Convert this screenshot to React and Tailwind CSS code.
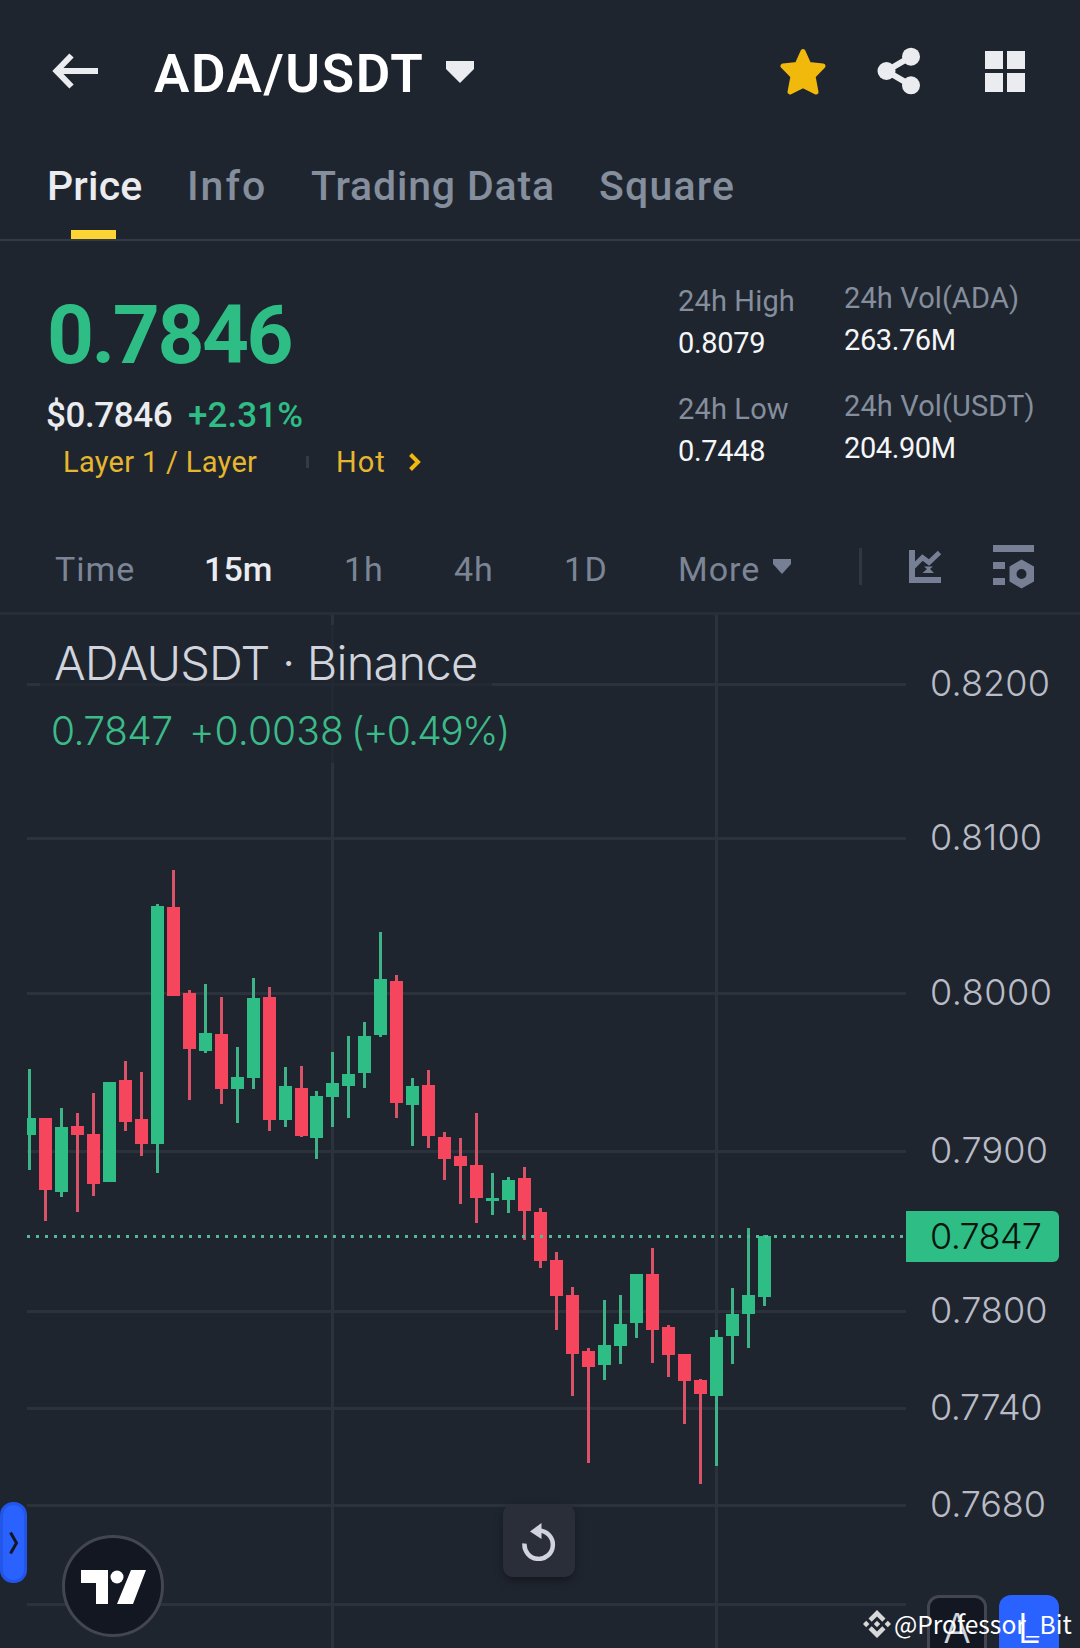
import React from "react";

const UP = "#2ebd85";
const DOWN = "#f6465d";
const UP_WICK = "#3fb388";
const DOWN_WICK = "#da5268";

// [direction, wick top, wick bottom, body top, body bottom]
const candles = [
  ["u", 1069, 1170, 1118, 1135],
  ["d", 1118, 1221, 1118, 1190],
  ["u", 1108, 1197, 1127, 1192],
  ["d", 1113, 1212, 1126, 1135],
  ["d", 1093, 1196, 1134, 1184],
  ["u", 1082, 1182, 1082, 1182],
  ["d", 1061, 1131, 1080, 1122],
  ["d", 1072, 1156, 1119, 1144],
  ["u", 904, 1173, 906, 1144],
  ["d", 870, 996, 907, 996],
  ["d", 990, 1100, 993, 1049],
  ["u", 984, 1053, 1033, 1051],
  ["d", 997, 1104, 1034, 1089],
  ["u", 1047, 1123, 1077, 1089],
  ["u", 978, 1089, 998, 1078],
  ["d", 987, 1131, 997, 1120],
  ["u", 1067, 1127, 1086, 1120],
  ["d", 1066, 1137, 1088, 1136],
  ["u", 1091, 1159, 1096, 1138],
  ["u", 1052, 1127, 1083, 1097],
  ["u", 1036, 1118, 1074, 1086],
  ["u", 1022, 1088, 1036, 1073],
  ["u", 932, 1037, 979, 1035],
  ["d", 975, 1118, 981, 1103],
  ["u", 1078, 1146, 1086, 1105],
  ["d", 1070, 1148, 1085, 1136],
  ["d", 1132, 1180, 1137, 1159],
  ["d", 1138, 1204, 1156, 1166],
  ["d", 1113, 1223, 1165, 1198],
  ["u", 1173, 1215, 1198, 1201],
  ["u", 1177, 1213, 1180, 1200],
  ["d", 1167, 1240, 1178, 1211],
  ["d", 1208, 1268, 1212, 1261],
  ["d", 1252, 1330, 1260, 1296],
  ["d", 1287, 1396, 1295, 1354],
  ["d", 1348, 1463, 1351, 1367],
  ["u", 1300, 1380, 1345, 1365],
  ["u", 1295, 1364, 1324, 1346],
  ["u", 1274, 1338, 1274, 1323],
  ["d", 1248, 1363, 1274, 1330],
  ["d", 1325, 1377, 1327, 1355],
  ["d", 1354, 1424, 1354, 1381],
  ["d", 1379, 1484, 1380, 1394],
  ["u", 1330, 1466, 1337, 1396],
  ["u", 1288, 1364, 1314, 1336],
  ["u", 1228, 1348, 1295, 1314],
  ["u", 1235, 1306, 1236, 1297],
];

const axis = [
  ["0.8200", 696, 120],
  ["0.8100", 850, 112],
  ["0.8000", 1005, 122],
  ["0.7900", 1163, 118],
  ["0.7800", 1323, 117.5],
  ["0.7740", 1420, 112.5],
  ["0.7680", 1517, 116],
];

const gridRows = [683, 837, 992, 1150, 1310, 1407, 1504, 1603];

function Header() {
  return (
    <header className="flex h-[142px] items-center pl-[52px] pr-[55px] text-[#eaecef]">
      <svg className="h-[38px] w-[47px] shrink-0" viewBox="0 0 47 38" fill="none" stroke="#eaecef" strokeWidth="6">
        <path d="M4 19H46M19.500 3.500L4.500 19L19.500 34.500" />
      </svg>
      <h1 className="ml-[55px] w-[292px] pt-[5px] text-[53px] font-semibold leading-[60px] tracking-[1.6px] text-white">ADA/USDT</h1>
      <svg className="mt-[2px] h-[22px] w-[28px] shrink-0" viewBox="0 0 28 22" fill="#eaecef">
        <path d="M0 0H28V8L14 22L0 8Z" />
      </svg>
      <svg className="ml-auto mt-[2px] h-[48px] w-[46px] shrink-0" viewBox="0 0 46 48" fill="#f0b90b" stroke="#f0b90b" strokeWidth="5" strokeLinejoin="round">
        <path d="M23 3.500L28.800 16.500L43 18L33 28.200L36 44L23 37.500L10 44L13 28.200L3 18L17.200 16.500Z" />
      </svg>
      <svg className="ml-[51px] h-[48px] w-[43px] shrink-0" viewBox="0 0 43 48" fill="#eaecef">
        <path d="M34 9.700L9.500 24L34 38.300" fill="none" stroke="#eaecef" strokeWidth="6" />
        <circle cx="9.500" cy="24" r="9" />
        <circle cx="34" cy="9.700" r="9" />
        <circle cx="34" cy="38.300" r="9" />
      </svg>
      <div className="ml-[65px] grid h-[41px] w-[40px] shrink-0 grid-cols-2 gap-[4px]">
        <i className="bg-[#eaecef]" />
        <i className="bg-[#eaecef]" />
        <i className="bg-[#eaecef]" />
        <i className="bg-[#eaecef]" />
      </div>
    </header>
  );
}

function Tabs() {
  return (
    <nav className="flex h-[99px] border-b-2 border-[#333b47] pl-[47px] pt-[19px] text-[41px] font-medium leading-[50px] text-[#848e9c]">
      <div className="flex w-[140px] flex-col justify-between text-[#eaecef]">
        <span className="tracking-[0.2px]">Price</span>
        <i className="ml-[24px] h-[9px] w-[45px] bg-[#fcd535]" />
      </div>
      <span className="w-[124px] tracking-[2px]">Info</span>
      <span className="w-[288px] tracking-[0.84px]">Trading Data</span>
      <span className="tracking-[1.2px]">Square</span>
    </nav>
  );
}

function Stat({ label, value, labelClass, valueClass }) {
  return (
    <div className="flex flex-col text-[29px] leading-[42px]">
      <span className={"text-[#848e9c] " + labelClass}>{label}</span>
      <span className={"text-[#f5f6f8] " + valueClass}>{value}</span>
    </div>
  );
}

function Summary() {
  return (
    <section className="flex h-[279px]">
      <div className="w-[678px] pt-[54px]">
        <div className="pl-[47px] text-[82px] font-bold leading-[80px] tracking-[-2.5px] text-[#2ebd85]">0.7846</div>
        <div className="mt-[21px] flex pl-[46px] text-[35px] font-medium leading-[40px]">
          <span className="w-[142px] tracking-[-0.4px] text-[#eaecef]">$0.7846</span>
          <span className="tracking-[0.1px] text-[#2ebd85]">+2.31%</span>
        </div>
        <div className="mt-[8px] flex items-center pl-[63px] text-[29px] leading-[36px] text-[#e6b62e]">
          <span className="w-[243px] tracking-[0.3px]">Layer 1 / Layer</span>
          <i className="h-[12px] w-[3px] bg-[#333b47]" />
          <span className="ml-[27px] w-[73px] tracking-[1px]">Hot</span>
          <svg className="h-[18px] w-[12px]" viewBox="0 0 12 18" fill="none" stroke="#f0b90b" strokeWidth="4">
            <path d="M1.500 1.500L9 9L1.500 16.500" />
          </svg>
        </div>
      </div>
      <div className="flex w-[166px] flex-col gap-[24px] pt-[39px]">
        <Stat label="24h High" value="0.8079" labelClass="tracking-[0.15px]" valueClass="tracking-[-0.3px]" />
        <Stat label="24h Low" value="0.7448" labelClass="tracking-[0.15px]" valueClass="tracking-[-0.3px]" />
      </div>
      <div className="flex flex-col gap-[24px] pt-[36px]">
        <Stat label="24h Vol(ADA)" value="263.76M" labelClass="tracking-[0.12px]" valueClass="tracking-[-0.4px]" />
        <Stat label="24h Vol(USDT)" value="204.90M" labelClass="tracking-[0.12px]" valueClass="tracking-[-0.4px]" />
      </div>
    </section>
  );
}

function Intervals() {
  return (
    <div className="flex h-[95px] items-center border-b-[3px] border-[#272e38] pl-[55px] text-[34px] leading-[40px] text-[#7c8596]">
      <span className="w-[149px] pt-[5px] tracking-[1px]">Time</span>
      <span className="w-[140px] pt-[5px] font-medium tracking-[0.1px] text-[#eaecef]">15m</span>
      <span className="w-[110px] pt-[5px] tracking-[0.9px]">1h</span>
      <span className="w-[110px] pt-[5px] tracking-[0.9px]">4h</span>
      <span className="w-[114px] pt-[5px] tracking-[1.5px]">1D</span>
      <span className="w-[95px] pt-[5px] tracking-[1px]">More</span>
      <svg className="h-[15px] w-[18px]" viewBox="0 0 18 15" fill="#767f93">
        <path d="M0 0H18V5L9 15L0 5Z" />
      </svg>
      <i className="ml-[68px] h-[37px] w-[3px] bg-[#2f3743]" />
      <svg className="ml-[47px] h-[33px] w-[33px]" viewBox="0 0 33 33" fill="#767f93">
        <path d="M0 0H6V27H32V33H0Z" />
        <path d="M4 17L13.500 7.500L20 12.500L30.500 2.500" fill="none" stroke="#767f93" strokeWidth="5" />
        <path d="M13.500 23H25L21 19L24 16.500H15L18 19Z" />
      </svg>
      <svg className="ml-[51px] mt-[2px] h-[44px] w-[42px]" viewBox="0 0 42 44" fill="#767f93">
        <path d="M0 0H41V7H0ZM0 17H12V24H0ZM0 33H12V40H0Z" />
        <path fillRule="evenodd" d="M28.500 14.500L41 21.500V36.500L28.500 43.500L16.500 36.500V21.500ZM28.500 24A5 5 0 1 0 28.500 34A5 5 0 1 0 28.500 24Z" />
      </svg>
    </div>
  );
}

function Candle({ data, index }) {
  const [dir, wickTop, wickBottom, top, bottom] = data;
  const x = index < 18 ? 28 + index * 16 : 27 + index * 16;
  const left = Math.max(27, x - 5);
  return (
    <g>
      <rect x={x} y={wickTop} width="3" height={wickBottom - wickTop} fill={dir === "u" ? UP_WICK : DOWN_WICK} />
      <rect x={left} y={top} width={x + 8 - left} height={bottom - top} fill={dir === "u" ? UP : DOWN} />
    </g>
  );
}

function Plot() {
  return (
    <svg className="block h-[1033px] w-[1080px]" viewBox="0 615 1080 1033">
      <g fill="#2b323b">
        {gridRows.map((y) => (
          <rect key={y} x="27" y={y} width="879" height="3" />
        ))}
        <rect x="331" y="615" width="3" height="1033" />
        <rect x="715" y="615" width="3" height="1033" />
      </g>
      <rect x="40" y="625" width="452" height="138" fill="#1f252f" opacity="0.65" />
      {candles.map((c, i) => (
        <Candle key={i} data={c} index={i} />
      ))}
      <path d="M27 1236.500H904" stroke="#55b995" strokeWidth="3" strokeDasharray="3 6" />
      <path d="M906 1211H1053A6 6 0 0 1 1059 1217V1256A6 6 0 0 1 1053 1262H906Z" fill={UP} />
      <g fontFamily="Inter, sans-serif" fontWeight="300" fontSize="36" fill="#b9bcc6">
        {axis.map(([label, y, length]) => (
          <text key={label} x="930" y={y} textLength={length}>{label}</text>
        ))}
        <text x="930" y="1249" textLength="112" fill="#05140c">0.7847</text>
      </g>
    </svg>
  );
}

function Chart() {
  return (
    <section className="relative h-[1033px] overflow-hidden font-['Inter',sans-serif]">
      <Plot />
      <div className="absolute left-[54px] top-[20px] whitespace-nowrap font-light">
        <div className="text-[47px] leading-[56px] tracking-[-0.8px] text-[#d1d4dc]">ADAUSDT · Binance</div>
        <div className="-ml-[3px] mt-[17px] flex text-[39px] leading-[46px] text-[#3cba88]">
          <span className="w-[138px] tracking-[-0.6px]">0.7847</span>
          <span className="w-[162px] tracking-[0.1px]">+0.0038</span>
          <span className="tracking-[-1.7px]">(+0.49%)</span>
        </div>
      </div>

      <div className="absolute left-0 top-[887px] flex h-[81px] w-[27px] items-center justify-center rounded-[13px] border-[3px] border-[#2156e8] bg-[#2962ff]">
        <svg className="h-[24px] w-[10px]" viewBox="0 0 10 24" fill="none" stroke="#131722" strokeWidth="3">
          <path d="M1.500 1.500L7.500 12L1.500 22.500" />
        </svg>
      </div>

      <div className="absolute left-[62px] top-[920px] flex h-[102px] w-[102px] items-center justify-center rounded-full border-[3px] border-[#434651] bg-[#131722]">
        <svg className="mb-[-2px] h-[34px] w-[65px]" viewBox="0 0 65 34" fill="#fff">
          <path d="M0 0H27V34H15V13H0ZM50 0H65L52 34H36Z" />
          <circle cx="36" cy="7" r="6.500" />
        </svg>
      </div>

      <div className="absolute left-[503px] top-[889px] flex h-[73px] w-[72px] items-center justify-center rounded-[10px] bg-[#2a2e39] shadow-[0_4px_8px_rgba(0,0,0,0.35)]">
        <svg className="mt-[2px] h-[38px] w-[34px]" viewBox="0 0 34 38" fill="none">
          <path d="M2.500 20.500A14.200 14.200 0 1 0 17 7.500" stroke="#d1d4dc" strokeWidth="4.500" />
          <path d="M8 8.500L19.500 0V16Z" fill="#d1d4dc" />
        </svg>
      </div>

      <div className="absolute left-[927px] top-[980px] flex gap-[12px] text-[41px] font-light leading-[48px]">
        <div className="h-[72px] w-[60px] rounded-[12px] border-[3px] border-[#434651] bg-[#131722] pt-[6px] text-center text-[#d1d4dc]">A</div>
        <div className="h-[72px] w-[60px] rounded-[12px] bg-[#2962ff] pt-[9px] text-center text-white">L</div>
      </div>

      <div className="absolute left-[863px] top-[992px] flex items-center whitespace-nowrap font-['Noto_Sans_CJK_SC',sans-serif] text-[24.6px] leading-[32px] text-white">
        <svg className="mt-[2px] h-[28px] w-[28px]" viewBox="0 0 28 28" fill="#d8d8da">
          <path d="M14 0L22.500 8.500L19.300 11.700L14 6.400L8.700 11.700L5.500 8.500ZM14 28L22.500 19.500L19.300 16.300L14 21.600L8.700 16.300L5.500 19.500ZM14 10.800L17.200 14L14 17.200L10.800 14ZM3.200 10.800L6.400 14L3.200 17.200L0 14ZM24.800 10.800L28 14L24.800 17.200L21.600 14Z" />
        </svg>
        <span className="ml-[3px]">@Professor_Bit</span>
      </div>
    </section>
  );
}

export default function App() {
  return (
    <main className="h-[1648px] w-[1080px] overflow-hidden bg-[#1f252f] font-['Roboto',sans-serif]">
      <Header />
      <Tabs />
      <Summary />
      <Intervals />
      <Chart />
    </main>
  );
}
